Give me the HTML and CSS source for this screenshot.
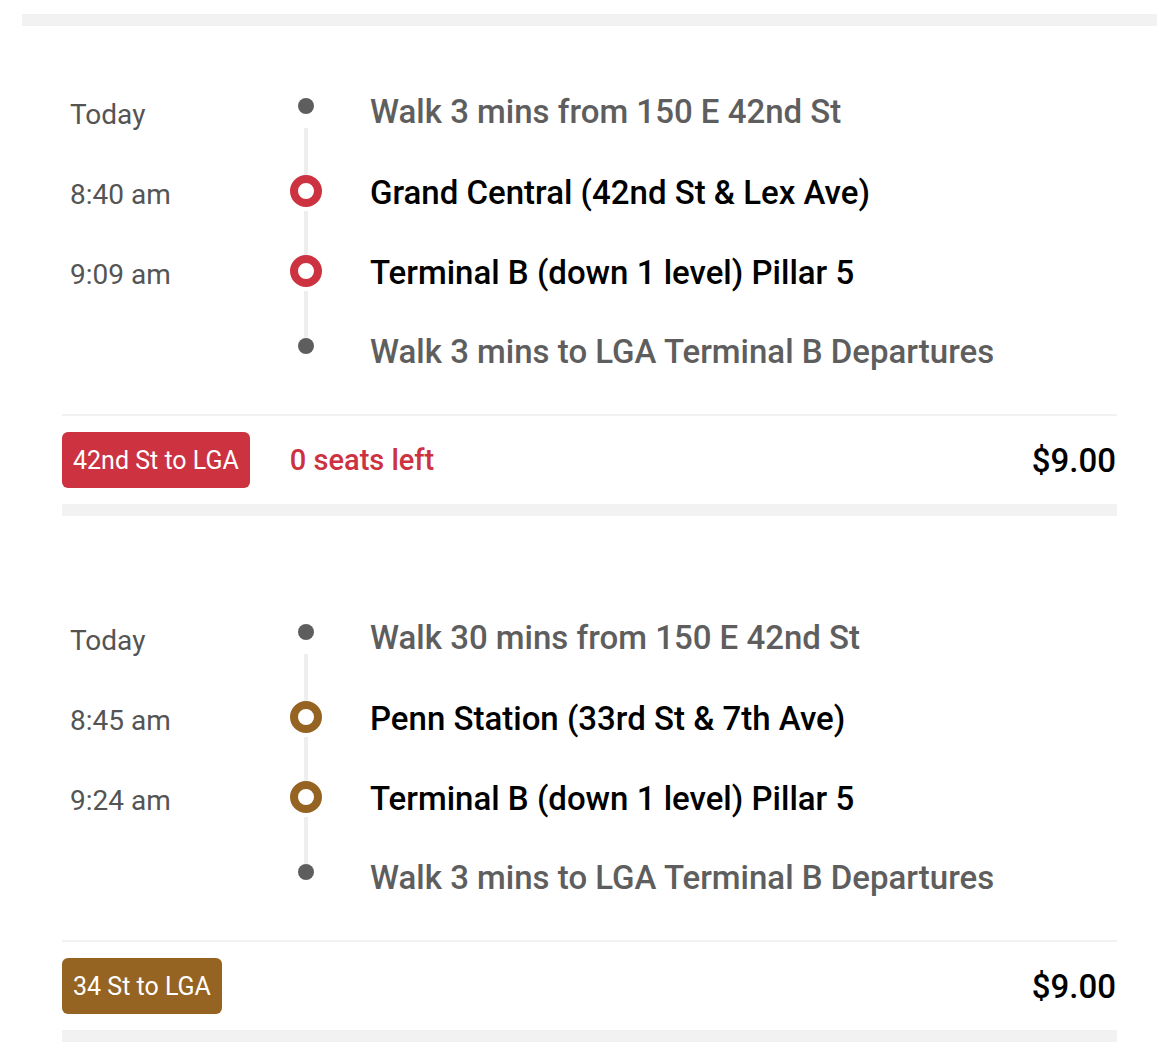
FILE: index.html
```html
<!DOCTYPE html>
<html lang="en">
<head>
<meta charset="utf-8">
<title>Trips to LGA</title>
<link rel="stylesheet" href="styles.css">
</head>
<body>
<div class="page">
  <div class="top-strip"></div>

  <section class="trip">
    <div class="stops">
      <div class="stop walk first">
        <div class="time">Today</div>
        <div class="track"><span class="seg"></span><span class="dot"></span><span class="seg"></span></div>
        <div class="label">Walk 3 mins from 150 E 42nd St</div>
      </div>
      <div class="stop station">
        <div class="time">8:40 am</div>
        <div class="track"><span class="seg"></span><span class="ring red"></span><span class="seg"></span></div>
        <div class="label">Grand Central (42nd St &amp; Lex Ave)</div>
      </div>
      <div class="stop station">
        <div class="time">9:09 am</div>
        <div class="track"><span class="seg"></span><span class="ring red"></span><span class="seg"></span></div>
        <div class="label">Terminal B (down 1 level) Pillar 5</div>
      </div>
      <div class="stop walk last">
        <div class="time"></div>
        <div class="track"><span class="seg"></span><span class="dot"></span><span class="seg"></span></div>
        <div class="label">Walk 3 mins to LGA Terminal B Departures</div>
      </div>
    </div>
    <div class="footer">
      <span class="badge red-bg">42nd St to LGA</span>
      <span class="seats">0 seats left</span>
      <span class="price">$9.00</span>
    </div>
  </section>

  <section class="trip">
    <div class="stops">
      <div class="stop walk first">
        <div class="time">Today</div>
        <div class="track"><span class="seg"></span><span class="dot"></span><span class="seg"></span></div>
        <div class="label">Walk 30 mins from 150 E 42nd St</div>
      </div>
      <div class="stop station">
        <div class="time">8:45 am</div>
        <div class="track"><span class="seg"></span><span class="ring brown"></span><span class="seg"></span></div>
        <div class="label">Penn Station (33rd St &amp; 7th Ave)</div>
      </div>
      <div class="stop station">
        <div class="time">9:24 am</div>
        <div class="track"><span class="seg"></span><span class="ring brown"></span><span class="seg"></span></div>
        <div class="label">Terminal B (down 1 level) Pillar 5</div>
      </div>
      <div class="stop walk last">
        <div class="time"></div>
        <div class="track"><span class="seg"></span><span class="dot"></span><span class="seg"></span></div>
        <div class="label">Walk 3 mins to LGA Terminal B Departures</div>
      </div>
    </div>
    <div class="footer">
      <span class="badge brown-bg">34 St to LGA</span>
      <span class="price">$9.00</span>
    </div>
  </section>
</div>
</body>
</html>
```

FILE: styles.css
```css
* { box-sizing: border-box; }

html, body {
  margin: 0;
  padding: 0;
  background: #ffffff;
}

body {
  font-family: Roboto, "Liberation Sans", Arial, sans-serif;
  color: #000000;
}

.top-strip {
  height: 12px;
  margin: 14px 17px 0 22px;
  background: #f2f2f2;
}

.trip {
  margin: 0 57px 0 62px;
  padding-top: 47px;
}

.trip + .trip {
  padding-top: 83px;
}

.stop {
  display: grid;
  grid-template-columns: 224px 40px 1fr;
  height: 80px;
}

.time {
  align-self: center;
  padding-left: 8px;
  margin-top: 3px;
  font-size: 28px;
  line-height: 34px;
  color: #545454;
  white-space: nowrap;
}

.track {
  display: flex;
  flex-direction: column;
  align-items: center;
}

.seg {
  flex: 1;
  width: 4px;
  background: #eeeeee;
}

.first .seg:first-child,
.last .seg:last-child {
  background: transparent;
}

.dot {
  flex: none;
  width: 16px;
  height: 16px;
  border-radius: 50%;
  background: #5e5e5e;
  margin-bottom: 14px;
}

.ring {
  flex: none;
  width: 32px;
  height: 32px;
  border-radius: 50%;
  border: 8px solid;
  background: #ffffff;
  margin-bottom: 4px;
}

.ring.red { border-color: #cc3240; }
.ring.brown { border-color: #966422; }

.label {
  align-self: center;
  margin-left: 44px;
  font-size: 33px;
  line-height: 38px;
  font-weight: 500;
  white-space: nowrap;
}

.walk .label {
  color: #5e5e5e;
  margin-bottom: 3px;
}

.station .label {
  color: #000000;
  margin-bottom: 1px;
}

.footer {
  display: flex;
  align-items: center;
  margin-top: 21px;
  padding: 16px 0;
  border-top: 2px solid #f2f2f2;
  border-bottom: 12px solid #f2f2f2;
}

.badge {
  display: flex;
  align-items: center;
  height: 56px;
  padding: 0 11px;
  border-radius: 6px;
  color: #ffffff;
  font-size: 25px;
  white-space: nowrap;
}

.red-bg { background: #cc3240; }
.brown-bg { background: #966422; }

.seats {
  margin-left: 40px;
  font-size: 29px;
  font-weight: 500;
  color: #cc3240;
}

.price {
  margin-left: auto;
  margin-right: 1px;
  font-size: 33px;
  font-weight: 500;
  color: #000000;
}
```
